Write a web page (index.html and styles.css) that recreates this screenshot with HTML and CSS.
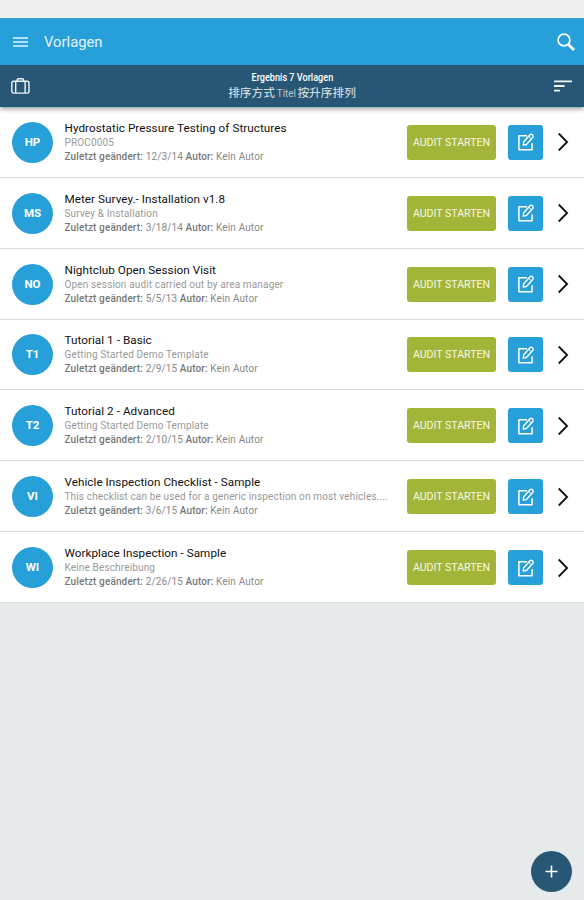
FILE: index.html
```html
<!DOCTYPE html>
<html lang="de">
<head>
    <meta charset="UTF-8">
    <meta name="viewport" content="width=device-width, initial-scale=1.0">
    <title>Vorlagen</title>
    <link rel="stylesheet" href="styles.css">
</head>
<body>
    <svg width="0" height="0" class="defs">
        <symbol id="edit" viewBox="0 0 20 20">
            <path d="M11 3.7H2.9v14h13.2v-6.5" fill="none" stroke="#fff" stroke-width="1.5" stroke-linejoin="round"/>
            <path d="M7.2 13.1l.5-3.3 6.3-7q1.2-1.1 2.5 0t.3 2.7l-6.4 7z" fill="none" stroke="#fff" stroke-width="1.4" stroke-linejoin="round"/>
            <path d="M12.8 4.4l2.7 2.4" stroke="#fff" stroke-width="1"/>
        </symbol>
        <symbol id="arrow" viewBox="0 0 12 20">
            <path d="M1.7 1.5l8.4 8.5-8.4 8.5" fill="none" stroke="#111" stroke-width="1.8"/>
        </symbol>
    </svg>

    <header class="topbar">
        <svg class="menu" width="15" height="10" viewBox="0 0 15 10"><path d="M0 1h15M0 5h15M0 9h15" stroke="#e4f3fb" stroke-width="1.5"/></svg>
        <h1>Vorlagen</h1>
        <svg class="search" width="18" height="18" viewBox="0 0 18 18"><circle cx="7" cy="7" r="5.9" fill="none" stroke="#fff" stroke-width="1.7"/><path d="M11.4 11.4l5.6 5.6" stroke="#fff" stroke-width="2.8"/></svg>
    </header>

    <div class="subbar">
        <svg width="19" height="16" viewBox="0 0 19 16" fill="none" stroke="#eef3f6" stroke-width="1.4"><rect x=".8" y="3.2" width="17.2" height="11.9" rx="1.8"/><path d="M4.7 3.2v11.9M14.1 3.2v11.9M6.2 3.2V1.9q0-1.1 1.1-1.1h4.2q1.1 0 1.1 1.1v1.3"/></svg>
        <div class="summary">
            <div class="result"><span>Ergebnis 7 Vorlagen</span></div>
            <div class="sort">排序方式 <span>Titel</span> 按升序排列</div>
        </div>
        <svg width="18" height="12" viewBox="0 0 18 12"><path d="M0 1.4h18M0 6h10.5M0 10.6h6" stroke="#f4f7f9" stroke-width="1.9"/></svg>
    </div>

    <main class="list">
        <div class="row">
            <div class="avatar">HP</div>
            <div class="info">
                <h2>Hydrostatic Pressure Testing of Structures</h2>
                <p>PROC0005</p>
                <p class="meta"><b>Zuletzt geändert:</b> 12/3/14 <b>Autor:</b> Kein Autor</p>
            </div>
            <button class="start">AUDIT STARTEN</button>
            <button class="edit"><svg><use href="#edit"/></svg></button>
            <svg class="arrow"><use href="#arrow"/></svg>
        </div>
        <div class="row">
            <div class="avatar">MS</div>
            <div class="info">
                <h2>Meter Survey.- Installation v1.8</h2>
                <p>Survey &amp; Installation</p>
                <p class="meta"><b>Zuletzt geändert:</b> 3/18/14 <b>Autor:</b> Kein Autor</p>
            </div>
            <button class="start">AUDIT STARTEN</button>
            <button class="edit"><svg><use href="#edit"/></svg></button>
            <svg class="arrow"><use href="#arrow"/></svg>
        </div>
        <div class="row">
            <div class="avatar">NO</div>
            <div class="info">
                <h2>Nightclub Open Session Visit</h2>
                <p>Open session audit carried out by area manager</p>
                <p class="meta"><b>Zuletzt geändert:</b> 5/5/13 <b>Autor:</b> Kein Autor</p>
            </div>
            <button class="start">AUDIT STARTEN</button>
            <button class="edit"><svg><use href="#edit"/></svg></button>
            <svg class="arrow"><use href="#arrow"/></svg>
        </div>
        <div class="row">
            <div class="avatar">T1</div>
            <div class="info">
                <h2>Tutorial 1 - Basic</h2>
                <p>Getting Started Demo Template</p>
                <p class="meta"><b>Zuletzt geändert:</b> 2/9/15 <b>Autor:</b> Kein Autor</p>
            </div>
            <button class="start">AUDIT STARTEN</button>
            <button class="edit"><svg><use href="#edit"/></svg></button>
            <svg class="arrow"><use href="#arrow"/></svg>
        </div>
        <div class="row">
            <div class="avatar">T2</div>
            <div class="info">
                <h2>Tutorial 2 - Advanced</h2>
                <p>Getting Started Demo Template</p>
                <p class="meta"><b>Zuletzt geändert:</b> 2/10/15 <b>Autor:</b> Kein Autor</p>
            </div>
            <button class="start">AUDIT STARTEN</button>
            <button class="edit"><svg><use href="#edit"/></svg></button>
            <svg class="arrow"><use href="#arrow"/></svg>
        </div>
        <div class="row">
            <div class="avatar">VI</div>
            <div class="info">
                <h2>Vehicle Inspection Checklist - Sample</h2>
                <p>This checklist can be used for a generic inspection on most vehicles....</p>
                <p class="meta"><b>Zuletzt geändert:</b> 3/6/15 <b>Autor:</b> Kein Autor</p>
            </div>
            <button class="start">AUDIT STARTEN</button>
            <button class="edit"><svg><use href="#edit"/></svg></button>
            <svg class="arrow"><use href="#arrow"/></svg>
        </div>
        <div class="row">
            <div class="avatar">WI</div>
            <div class="info">
                <h2>Workplace Inspection - Sample</h2>
                <p>Keine Beschreibung</p>
                <p class="meta"><b>Zuletzt geändert:</b> 2/26/15 <b>Autor:</b> Kein Autor</p>
            </div>
            <button class="start">AUDIT STARTEN</button>
            <button class="edit"><svg><use href="#edit"/></svg></button>
            <svg class="arrow"><use href="#arrow"/></svg>
        </div>
    </main>

    <button class="add"><svg width="13" height="13" viewBox="0 0 13 13"><path d="M6.5 .5v12M.5 6.5h12" stroke="#fff" stroke-width="1.6"/></svg></button>
</body>
</html>
```
FILE: styles.css
```css
* {
    box-sizing: border-box;
}

body {
    margin: 0;
    padding-top: 18px;
    height: 900px;
    overflow: hidden;
    font-family: Roboto, "Noto Sans CJK SC", sans-serif;
    background: linear-gradient(#eeeeee 18px, #e6eaeb 18px);
}

h1, h2, p {
    margin: 0;
    font-weight: 400;
}

svg {
    display: block;
    flex-shrink: 0;
}

button {
    border: none;
    padding: 0;
    font-family: inherit;
    flex-shrink: 0;
}

.defs {
    position: absolute;
}

.topbar {
    display: flex;
    align-items: center;
    height: 47px;
    padding: 0 9px 1px 13px;
    background-color: #279fd9;
    border-top: 1px solid #3aa3d6;
}

.topbar h1 {
    flex: 1;
    margin-left: 16px;
    font-size: 14.8px;
    color: #e4f3fb;
}

.subbar {
    position: relative;
    display: flex;
    align-items: center;
    justify-content: space-between;
    height: 42px;
    padding: 0 12px 0 11px;
    background-color: #275775;
    border-bottom: 1px solid #15597a;
    box-shadow: 0 2px 5px rgba(0, 0, 0, 0.4);
}

/* keeps the subbar shadow off the top bar */
.topbar {
    position: relative;
    z-index: 1;
}

.summary {
    padding-bottom: 2px;
    text-align: center;
    font-size: 11.7px;
    line-height: 16px;
    color: #e3e9ed;
}

/* condensed look for the latin text */
.result span {
    display: inline-block;
    transform: scaleX(0.78);
    margin: 0 -20px;
    color: #fff;
    font-weight: 500;
}

.sort span {
    display: inline-block;
    transform: scaleX(0.85);
    margin: 0 -3px;
    color: #b9c8d2;
}

.list {
    height: 496px;
    display: grid;
    grid-template-rows: repeat(7, 1fr);
    background-color: #fff;
}

.row {
    display: flex;
    align-items: center;
    padding: 1px 15px 0 12px;
    border-bottom: 1px solid #d8dcde;
}

.avatar {
    width: 41px;
    height: 41px;
    flex-shrink: 0;
    border-radius: 50%;
    background-color: #279fd9;
    color: #fff;
    font-size: 11.5px;
    font-weight: 700;
    line-height: 41px;
    text-align: center;
}

.info {
    flex: 1;
    min-width: 0;
    margin-left: 11.5px;
    white-space: nowrap;
}

.info h2 {
    font-size: 11.7px;
    line-height: 15px;
    letter-spacing: 0.05px;
    color: #111;
}

.info p {
    font-size: 10px;
    line-height: 14px;
    letter-spacing: 0.15px;
    color: #999;
}

.info .meta {
    color: #888;
    letter-spacing: 0.13px;
}

.meta b {
    font-weight: 500;
    color: #777;
}

.start {
    width: 89px;
    height: 35px;
    border-radius: 3px;
    background-color: #a2b539;
    color: #f6f8e8;
    font-size: 10.6px;
}

.edit {
    display: flex;
    align-items: center;
    justify-content: center;
    width: 35px;
    height: 35px;
    margin: 0 14px 0 12px;
    border-radius: 3px;
    background-color: #279fd9;
}

.edit svg {
    width: 20px;
    height: 20px;
}

.arrow {
    width: 12px;
    height: 20px;
}

.add {
    position: absolute;
    right: 12px;
    bottom: 8px;
    display: flex;
    align-items: center;
    justify-content: center;
    width: 41px;
    height: 41px;
    border-radius: 50%;
    background-color: #275775;
}
```
